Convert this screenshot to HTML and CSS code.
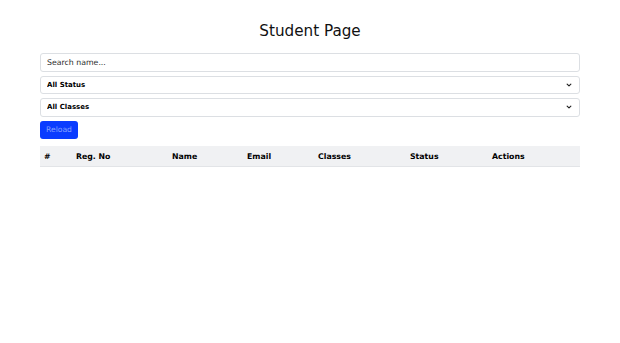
FILE: index.html
```html
<!DOCTYPE html>
<html lang="en">

<head>
  <meta charset="UTF-8">
  <meta name="viewport" content="width=device-width, initial-scale=1.0">
  <title>Student Page</title>
  <link rel="stylesheet" href="styles.css">
</head>

<body>
  <div class="container">
    <h1 class="page-title">Student Page</h1>

    <!-- Filtros -->
    <div class="filters">
      <input type="text" class="field" placeholder="Search name...">
      <select class="field select">
        <option>All Status</option>
      </select>
      <select class="field select">
        <option>All Classes</option>
      </select>
    </div>

    <button class="btn-reload">Reload</button>

    <!-- Tabela de alunos -->
    <table class="student-table">
      <thead>
        <tr>
          <th class="col-num">#</th>
          <th class="col-reg">Reg. No</th>
          <th class="col-name">Name</th>
          <th class="col-email">Email</th>
          <th class="col-classes">Classes</th>
          <th class="col-status">Status</th>
          <th class="col-actions">Actions</th>
        </tr>
      </thead>
      <tbody id="student-list"></tbody>
    </table>
  </div>
</body>

</html>
```

FILE: styles.css
```css
body {
  margin: 0;
  font-family: "DejaVu Sans", sans-serif;
  background: #fff;
  color: #111;
}

.container {
  width: 540px;
  margin: 0 auto;
  padding-top: 22px;
}

.page-title {
  margin: 0 0 12px;
  text-align: center;
  font-size: 15.2px;
  font-weight: normal;
  line-height: 19px;
}

.filters {
  display: flex;
  flex-direction: column;
  gap: 4px;
}

.field {
  box-sizing: border-box;
  width: 100%;
  height: 18.5px;
  margin: 0;
  padding: 0 6px;
  font-family: "DejaVu Sans", sans-serif;
  font-size: 7.8px;
  color: #000;
  background: #fff;
  border: 1px solid #dcdfe3;
  border-radius: 3px;
  outline: none;
}

.field::placeholder {
  color: #2a2a2a;
}

.select {
  appearance: none;
  font-weight: bold;
  font-size: 7px;
  background-image: url("data:image/svg+xml,%3Csvg xmlns='http://www.w3.org/2000/svg' viewBox='0 0 16 16'%3E%3Cpath fill='none' stroke='%23222' stroke-linecap='round' stroke-linejoin='round' stroke-width='3' d='M3 5.5l5 5 5-5'/%3E%3C/svg%3E");
  background-repeat: no-repeat;
  background-position: right 7px center;
  background-size: 6px 6px;
}

.btn-reload {
  display: block;
  margin-top: 4px;
  width: 38px;
  height: 18px;
  padding: 0;
  font-family: "DejaVu Sans", sans-serif;
  font-size: 7.6px;
  color: #86a2ff;
  background: #0a3cff;
  border: none;
  border-radius: 3px;
}

.student-table {
  width: 100%;
  margin-top: 7.5px;
  border-collapse: collapse;
  table-layout: fixed;
}

.student-table th {
  height: 20px;
  padding: 0 4px;
  text-align: left;
  font-size: 7.8px;
  font-weight: bold;
  color: #000;
  background: #f0f1f3;
  border-bottom: 1px solid #e2e4e7;
}

.col-num { width: 24px; }
.col-reg { width: 88px; }
.col-name { width: 67px; }
.col-email { width: 63px; }
.col-classes { width: 84px; }
.col-status { width: 74px; }
.col-actions { width: 84px; }
```
